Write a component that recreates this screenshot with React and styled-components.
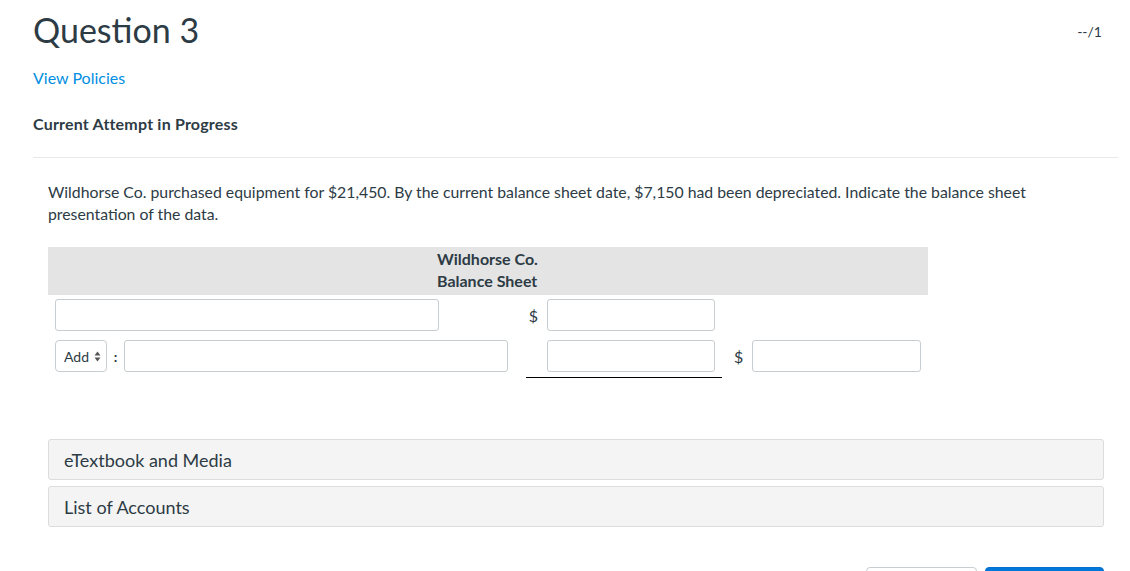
import React from "react";
import styled, { createGlobalStyle } from "styled-components";

const Global = createGlobalStyle`
  html, body { margin: 0; padding: 0; background: #fff; }
  body { font-family: Lato, "Open Sans", sans-serif; color: #2d3b45; }
  * { box-sizing: border-box; }
`;

const Page = styled.div`
  padding: 0 12px 0 33px;
  width: 1130px;
  height: 571px;
  overflow: hidden;
`;

const Header = styled.div`
  display: flex;
  justify-content: space-between;
  align-items: flex-start;
  padding-top: 9px;
`;

const Title = styled.h1`
  margin: 0;
  font-size: 34px;
  font-weight: 400;
  line-height: 41px;
  color: #2d3b45;
`;

const Score = styled.div`
  font-size: 14px;
  line-height: 20px;
  margin-top: 13px;
  margin-right: 16px;
  color: #2d3b45;
`;

const PolicyLink = styled.a`
  display: block;
  margin-top: 17px;
  font-size: 16px;
  line-height: 22px;
  color: #008ee2;
  text-decoration: none;
`;

const Attempt = styled.div`
  margin-top: 24px;
  font-size: 16px;
  line-height: 22px;
  font-weight: 700;
  letter-spacing: 0.2px;
  color: #2d3b45;
`;

const Divider = styled.hr`
  margin: 22px 0 0;
  border: 0;
  border-top: 1px solid #e8e9ea;
`;

const Body = styled.div`
  padding: 0 14px 0 15px;
`;

const Question = styled.p`
  margin: 23px 0 0;
  font-size: 15.8px;
  line-height: 22px;
  color: #2d3b45;
`;

const Sheet = styled.div`
  margin-top: 22px;
  width: 880px;
`;

const SheetHead = styled.div`
  background: #e4e4e4;
  height: 48px;
  padding: 1px 0 0 389px;
  font-size: 16px;
  font-weight: 700;
  line-height: 22px;
  color: #2d3b45;
`;

const Row = styled.div`
  display: grid;
  grid-template-columns: 460px 39px 168px 37px 169px;
  align-items: center;
  margin-top: ${(p) => p.$gap}px;
  height: 32px;
`;

const LabelCell = styled.div`
  display: flex;
  align-items: center;
  padding-left: 7px;
  height: 32px;
`;

const TextInput = styled.input`
  height: 32px;
  width: ${(p) => (p.$w ? `${p.$w}px` : "100%")};
  min-width: 0;
  flex: ${(p) => (p.$w ? "0 0 auto" : "1 1 auto")};
  border: 1px solid #c7cdd1;
  border-radius: 3px;
  background: #fff;
  padding: 0 8px;
  font-family: inherit;
  font-size: 15px;
  outline: none;
`;

const AmountCell = styled.div`
  position: relative;
  display: flex;
  height: 32px;
`;

const Underline = styled.div`
  position: absolute;
  left: -21px;
  right: -7px;
  bottom: -6px;
  border-bottom: 1px solid #000;
`;

const Dollar = styled.span`
  font-size: 16px;
  text-align: ${(p) => (p.$left ? "left" : "right")};
  padding: ${(p) => (p.$left ? "0 0 0 19px" : "0 9px 0 0")};
  color: #2d3b45;
`;

const Select = styled.div`
  display: flex;
  flex: 0 0 52px;
  align-items: center;
  gap: 5px;
  height: 32px;
  width: 52px;
  border: 1px solid #c7cdd1;
  border-radius: 4px;
  padding-left: 8px;
  font-size: 14px;
  color: #2d3b45;
  background: #fff;
`;

const Colon = styled.span`
  flex: 0 0 17px;
  text-align: center;
  font-size: 14px;
  font-weight: 700;
`;

const Accordions = styled.div`
  margin-top: 67px;
  display: flex;
  flex-direction: column;
  gap: 6px;
`;

const Panel = styled.div`
  height: 41px;
  display: flex;
  align-items: center;
  padding-left: 15px;
  background: #f4f4f4;
  border: 1px solid #dcdcdc;
  border-radius: 3px;
  font-size: 18px;
  color: #2d3b45;
`;

const Footer = styled.div`
  display: flex;
  justify-content: flex-end;
  gap: 8px;
  margin-top: 40px;
`;

const Button = styled.button`
  height: 36px;
  width: ${(p) => p.$w}px;
  border-radius: 4px;
  border: 1px solid ${(p) => (p.$primary ? "#0770cf" : "#c7cdd1")};
  background: ${(p) => (p.$primary ? "#0077d9" : "#fff")};
`;

function Arrows() {
  return (
    <svg width="7" height="11" viewBox="0 0 7 11">
      <path d="M3.5 0.5 L6.5 4.5 H0.5 Z" fill="#555" />
      <path d="M3.5 10.5 L6.5 6.5 H0.5 Z" fill="#555" />
    </svg>
  );
}

export default function App() {
  return (
    <>
      <Global />
      <Page>
        <Header>
          <Title>Question 3</Title>
          <Score>--/1</Score>
        </Header>
        <PolicyLink href="#">View Policies</PolicyLink>
        <Attempt>Current Attempt in Progress</Attempt>
        <Divider />
        <Body>
          <Question>
            Wildhorse Co. purchased equipment for $21,450. By the current balance sheet date, $7,150 had been
            depreciated. Indicate the balance sheet presentation of the data.
          </Question>
          <Sheet>
            <SheetHead>
              Wildhorse Co.
              <br />
              Balance Sheet
            </SheetHead>
            <Row $gap={4}>
              <LabelCell>
                <TextInput $w={384} />
              </LabelCell>
              <Dollar>$</Dollar>
              <AmountCell>
                <TextInput />
              </AmountCell>
              <span />
              <span />
            </Row>
            <Row $gap={9}>
              <LabelCell>
                <Select>
                  Add <Arrows />
                </Select>
                <Colon>:</Colon>
                <TextInput />
              </LabelCell>
              <span />
              <AmountCell>
                <TextInput />
                <Underline />
              </AmountCell>
              <Dollar $left>$</Dollar>
              <AmountCell>
                <TextInput />
              </AmountCell>
            </Row>
          </Sheet>
          <Accordions>
            <Panel>eTextbook and Media</Panel>
            <Panel>List of Accounts</Panel>
          </Accordions>
          <Footer>
            <Button $w={111} />
            <Button $w={119} $primary />
          </Footer>
        </Body>
      </Page>
    </>
  );
}
